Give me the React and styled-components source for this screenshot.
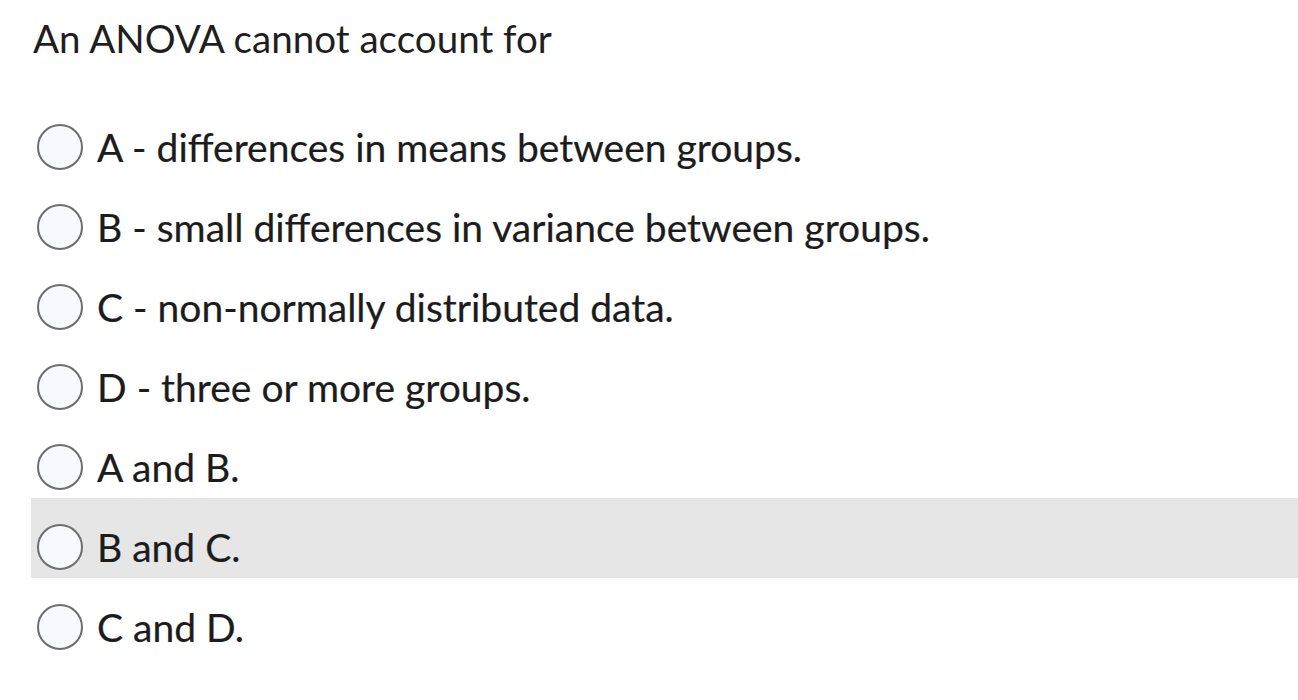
import React from "react"
import styled, { createGlobalStyle } from "styled-components"

const GlobalStyle = createGlobalStyle`
  body {
    margin: 0;
    background: #ffffff;
    font-family: Lato, "Open Sans", sans-serif;
    color: #1f1f1f;
  }
`

const Quiz = styled.div`
  padding: 15px 0 0 31px;
`

const Question = styled.p`
  margin: 0 0 37px 2px;
  font-size: 38.6px;
  line-height: 46px;
  font-weight: 400;
  color: #1f1f1f;
`

const Options = styled.div`
  display: flex;
  flex-direction: column;
`

const Option = styled.label`
  display: flex;
  align-items: center;
  gap: 14px;
  height: 80px;
  padding: 18px 0 0 6px;
  box-sizing: border-box;
  background: ${(p) => (p.$hover ? "#e6e6e6" : "transparent")};
  cursor: pointer;
`

const Radio = styled.span`
  flex: none;
  width: 46px;
  height: 46px;
  border: 2px solid #6e6e6e;
  border-radius: 50%;
  background: #f8f9fe;
  box-sizing: border-box;
`

const Text = styled.span`
  font-size: 39px;
  line-height: 46px;
  color: #1c1c1c;
  -webkit-text-stroke: 0.2px #1c1c1c;
`

const answers = [
  "A - differences in means between groups.",
  "B - small differences in variance between groups.",
  "C - non-normally distributed data.",
  "D - three or more groups.",
  "A and B.",
  "B and C.",
  "C and D.",
]

export default function App() {
  return (
    <>
      <GlobalStyle />
      <Quiz>
        <Question>An ANOVA cannot account for</Question>
        <Options>
          {answers.map((a, i) => (
            <Option key={a} $hover={i === 5}>
              <Radio />
              <Text>{a}</Text>
            </Option>
          ))}
        </Options>
      </Quiz>
    </>
  )
}
